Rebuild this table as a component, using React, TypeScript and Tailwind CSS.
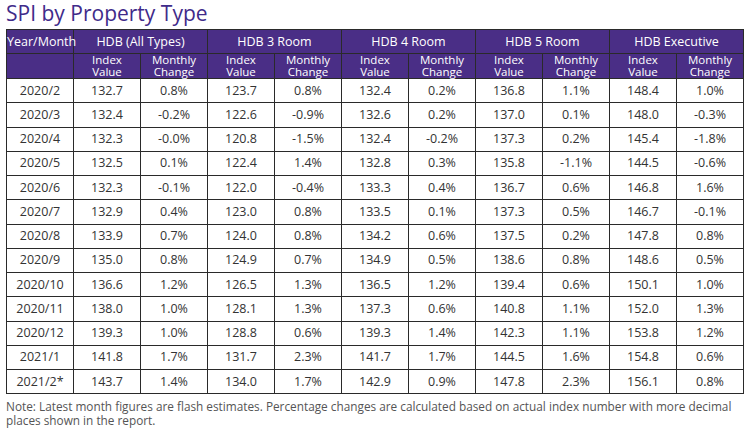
import React from "react";

const rows: string[][] = [
  ["2020/2", "132.7", "0.8%", "123.7", "0.8%", "132.4", "0.2%", "136.8", "1.1%", "148.4", "1.0%"],
  ["2020/3", "132.4", "-0.2%", "122.6", "-0.9%", "132.6", "0.2%", "137.0", "0.1%", "148.0", "-0.3%"],
  ["2020/4", "132.3", "-0.0%", "120.8", "-1.5%", "132.4", "-0.2%", "137.3", "0.2%", "145.4", "-1.8%"],
  ["2020/5", "132.5", "0.1%", "122.4", "1.4%", "132.8", "0.3%", "135.8", "-1.1%", "144.5", "-0.6%"],
  ["2020/6", "132.3", "-0.1%", "122.0", "-0.4%", "133.3", "0.4%", "136.7", "0.6%", "146.8", "1.6%"],
  ["2020/7", "132.9", "0.4%", "123.0", "0.8%", "133.5", "0.1%", "137.3", "0.5%", "146.7", "-0.1%"],
  ["2020/8", "133.9", "0.7%", "124.0", "0.8%", "134.2", "0.6%", "137.5", "0.2%", "147.8", "0.8%"],
  ["2020/9", "135.0", "0.8%", "124.9", "0.7%", "134.9", "0.5%", "138.6", "0.8%", "148.6", "0.5%"],
  ["2020/10", "136.6", "1.2%", "126.5", "1.3%", "136.5", "1.2%", "139.4", "0.6%", "150.1", "1.0%"],
  ["2020/11", "138.0", "1.0%", "128.1", "1.3%", "137.3", "0.6%", "140.8", "1.1%", "152.0", "1.3%"],
  ["2020/12", "139.3", "1.0%", "128.8", "0.6%", "139.3", "1.4%", "142.3", "1.1%", "153.8", "1.2%"],
  ["2021/1", "141.8", "1.7%", "131.7", "2.3%", "141.7", "1.7%", "144.5", "1.6%", "154.8", "0.6%"],
  ["2021/2*", "143.7", "1.4%", "134.0", "1.7%", "142.9", "0.9%", "147.8", "2.3%", "156.1", "0.8%"],
];

const groups = ["HDB (All Types)", "HDB 3 Room", "HDB 4 Room", "HDB 5 Room", "HDB Executive"];

export default function App() {
  return (
    <div className="w-[750px] h-[433px] bg-white overflow-hidden font-['Open_Sans',sans-serif]">
      <h1 className="ml-[6px] h-[27px] text-[21px] leading-[27px] text-[#3f2b8a] font-medium">
        SPI by Property Type
      </h1>
      <table className="ml-[6px] mt-[2px] w-[737px] table-fixed border-collapse">
        <colgroup>
          {Array.from({ length: 11 }).map((_, i) => (
            <col key={i} className="w-[67px]" />
          ))}
        </colgroup>
        <thead>
          <tr className="h-[24px] bg-[#4a2e86] text-white text-[12.5px]">
            <th className="border border-[#2a2a2a] font-normal p-0 leading-[14px]">Year/Month</th>
            {groups.map((g) => (
              <th key={g} colSpan={2} className="border border-[#2a2a2a] font-normal p-0 leading-[14px]">
                {g}
              </th>
            ))}
          </tr>
          <tr className="h-[24px] bg-[#4a2e86] text-white text-[11.5px]">
            <th className="border border-[#2a2a2a] font-normal p-0"></th>
            {groups.map((g) => (
              <React.Fragment key={g}>
                <th className="border border-[#2a2a2a] font-normal p-0 leading-[12px]">
                  <div>Index</div>
                  <div>Value</div>
                </th>
                <th className="border border-[#2a2a2a] font-normal p-0 leading-[12px]">
                  <div>Monthly</div>
                  <div>Change</div>
                </th>
              </React.Fragment>
            ))}
          </tr>
        </thead>
        <tbody>
          {rows.map((r) => (
            <tr key={r[0]} className="h-[24.25px] text-[12.5px] text-[#333333]">
              {r.map((c, i) => (
                <td key={i} className="border border-[#2a2a2a] p-0 text-center leading-[14px]">
                  {c}
                </td>
              ))}
            </tr>
          ))}
        </tbody>
      </table>
      <p className="ml-[6px] mt-[5px] text-[11.8px] leading-[14px] text-[#555555] w-[740px]">
        Note: Latest month figures are flash estimates. Percentage changes are calculated based on actual index number with more decimal places shown in the report.
      </p>
    </div>
  );
}
